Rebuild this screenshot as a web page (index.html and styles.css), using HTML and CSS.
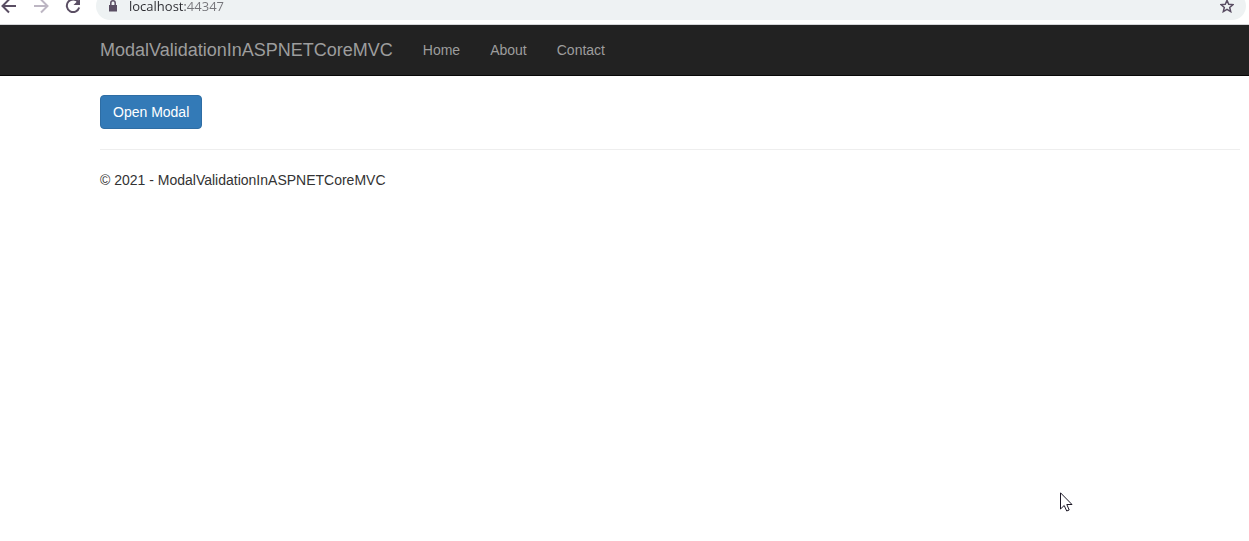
FILE: index.html
```html
<!DOCTYPE html>
<html lang="en">
  <head>
    <meta charset="UTF-8" />
    <meta name="viewport" content="width=device-width, initial-scale=1.0" />
    <title>ModalValidationInASPNETCoreMVC</title>
    <link rel="stylesheet" href="styles.css">
  </head>
  <body>
    <!-- Browser toolbar -->
    <div class="toolbar">
      <button class="tool-btn" type="button" aria-label="Back">
        <svg width="18" height="18" viewBox="0 0 18 18">
          <path d="M16 9H3M9 2.5L2.5 9L9 15.500" />
        </svg>
      </button>
      <button class="tool-btn tool-btn-disabled" type="button" aria-label="Forward">
        <svg width="18" height="18" viewBox="0 0 18 18">
          <path d="M2 9H15M9 2.500L15.500 9L9 15.500" />
        </svg>
      </button>
      <button class="tool-btn" type="button" aria-label="Reload">
        <svg width="18" height="18" viewBox="0 0 18 18">
          <path d="M14.200 5A6.300 6.300 0 1 0 15.200 10.500" />
          <path class="fill" d="M16 1.500V8H9.500z" />
        </svg>
      </button>
      <div class="address-bar">
        <svg class="lock" width="8" height="12" viewBox="0 0 8 12">
          <path class="fill" d="M0 5h8v6.500H0z" />
          <path class="shackle" d="M1.800 5V3a2.200 2.200 0 0 1 4.400 0v2" />
        </svg>
        <input class="address" type="text" aria-label="Address" value="localhost:44347" />
        <button class="tool-btn" type="button" aria-label="Bookmark this page">
          <svg class="star" width="14" height="14" viewBox="0 0 14 14">
            <path d="M7 1.300L8.700 5.200L12.900 5.600L9.700 8.400L10.700 12.600L7 10.400L3.300 12.600L4.300 8.400L1.100 5.600L5.300 5.200z" />
          </svg>
        </button>
      </div>
    </div>

    <nav class="navbar">
      <a class="navbar-brand" href="#">ModalValidationInASPNETCoreMVC</a>
      <a class="nav-link" href="#">Home</a>
      <a class="nav-link" href="#">About</a>
      <a class="nav-link" href="#">Contact</a>
    </nav>

    <div class="container">
      <button class="btn btn-primary" type="button">Open Modal</button>
      <hr />
      <footer>
        <p>&copy; 2021 - ModalValidationInASPNETCoreMVC</p>
      </footer>
    </div>

    <!-- Mouse pointer -->
    <svg class="cursor" width="13" height="20" viewBox="0 0 13 20">
      <path d="M.5 .8V17L4.200 13.500L6.700 19L9.200 18L6.800 12.500H12z" />
    </svg>
  </body>
</html>
```

FILE: styles.css
```css
* {
  box-sizing: border-box;
}

body {
  margin: 0;
  font-family: "Liberation Sans", Arial, sans-serif;
  font-size: 14px;
  line-height: 20px;
  color: #333;
  background: #fff;
}

/* Browser toolbar */
.toolbar {
  display: flex;
  align-items: flex-end;
  gap: 14px;
  height: 25px;
  padding: 0 3px 4px 0;
  border-bottom: 1px solid #d5d6d9;
  overflow: hidden;
}

.tool-btn {
  display: flex;
  align-items: center;
  justify-content: center;
  flex: none;
  width: 18px;
  height: 28px;
  padding: 0;
  border: none;
  background: none;
  color: #5a4e63;
}

.tool-btn-disabled {
  color: #bdb6c3;
}

.toolbar svg {
  fill: none;
  stroke: currentColor;
  stroke-width: 2;
}

.toolbar svg .fill {
  fill: currentColor;
  stroke: none;
}

.toolbar .star {
  stroke-width: 1.5;
}

.address-bar {
  display: flex;
  align-items: center;
  flex: 1;
  gap: 12px;
  height: 28px;
  padding: 0 10px 0 13px;
  border-radius: 14px;
  background: #eef2f3;
}

.lock {
  color: #5a4e63;
}

.lock .shackle {
  stroke-width: 1.5;
}

/* host is dark, port is grey */
.address {
  flex: 1;
  min-width: 0;
  padding: 0;
  border: none;
  outline: none;
  font-family: "Open Sans", "Noto Sans", sans-serif;
  font-size: 13px;
  line-height: 20px;
  color: transparent;
  background: linear-gradient(to right, #2b2b30 56px, #75757a 56px);
  -webkit-background-clip: text;
  background-clip: text;
}

/* Navbar */
.navbar {
  display: flex;
  padding: 0 85px;
  background: #222;
  border-bottom: 1px solid #080808;
}

.navbar a {
  padding: 15px;
  color: #9d9d9d;
  text-decoration: none;
}

.navbar a:hover {
  color: #fff;
}

.navbar .navbar-brand {
  font-size: 18px;
}

/* Page content */
.container {
  padding: 19px 9px 0 100px;
}

.btn {
  display: block;
  padding: 6px 12px;
  border: 1px solid transparent;
  border-radius: 4px;
  font-family: inherit;
  font-size: 14px;
  line-height: 20px;
  cursor: pointer;
}

.btn-primary {
  color: #fff;
  background: #337ab7;
  border-color: #2e6da4;
}

.btn-primary:hover {
  background: #286090;
}

hr {
  margin: 20px 0;
  border: none;
  border-top: 1px solid #eee;
}

p {
  margin: 0 0 10px;
}

.cursor {
  position: absolute;
  top: 492px;
  left: 1060px;
  fill: #fff;
  stroke: #1c1826;
}
```
